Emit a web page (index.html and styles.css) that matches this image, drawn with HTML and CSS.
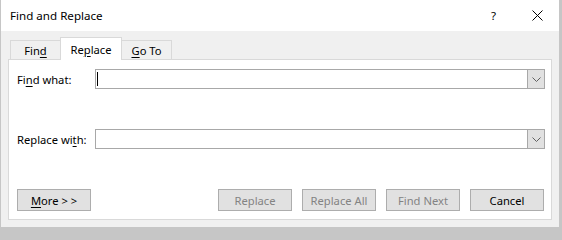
FILE: index.html
```html
<!DOCTYPE html>
<html>
<head>
<meta charset="utf-8">
<link rel="stylesheet" href="styles.css">
</head>
<body>
<div class="window">
  <div class="titlebar">
    <span class="title">Find and Replace</span>
    <span class="help">?</span>
    <span class="close">
      <svg width="11" height="11" viewBox="0 0 11 11"><path d="M0.5 0.5 L10.5 10.5 M10.5 0.5 L0.5 10.5" stroke="#000" stroke-width="1" fill="none"/></svg>
    </span>
  </div>
  <div class="content">
    <div class="tabs">
      <div class="tab tab-find">Fin<u>d</u></div>
      <div class="tab tab-replace active">Re<u>p</u>lace</div>
      <div class="tab tab-goto"><u>G</u>o To</div>
    </div>
    <div class="panel">
      <div class="row">
        <label class="label">Fi<u>n</u>d what:</label>
        <div class="combo">
          <div class="field"><span class="caret"></span></div>
          <div class="drop"><svg width="9" height="5" viewBox="0 0 9 5"><path d="M0.5 0.5 L4.5 4.5 L8.5 0.5" stroke="#606060" stroke-width="1" fill="none"/></svg></div>
        </div>
      </div>
      <div class="row row-gap">
        <label class="label">Replace wi<u>t</u>h:</label>
        <div class="combo">
          <div class="field"></div>
          <div class="drop"><svg width="9" height="5" viewBox="0 0 9 5"><path d="M0.5 0.5 L4.5 4.5 L8.5 0.5" stroke="#606060" stroke-width="1" fill="none"/></svg></div>
        </div>
      </div>
      <div class="buttons">
        <button class="btn"><u>M</u>ore &gt; &gt;</button>
        <div class="spacer"></div>
        <button class="btn disabled">Replace</button>
        <button class="btn disabled">Replace All</button>
        <button class="btn disabled">Find Next</button>
        <button class="btn">Cancel</button>
      </div>
    </div>
  </div>
</div>
</body>
</html>
```
FILE: styles.css
```css
html, body {
  margin: 0;
  padding: 0;
}
body {
  background: #c6c6c6;
  width: 562px;
  height: 231px;
  overflow: hidden;
  font-family: "Noto Sans", "Open Sans", sans-serif;
  font-size: 11.2px;
  color: #000;
}
u {
  text-decoration: underline;
  text-underline-offset: 2px;
}
.window {
  width: 558px;
  height: 227px;
  margin-left: 1px;
  background: #f0f0f0;
}
.titlebar {
  height: 31px;
  background: #fff;
  display: flex;
  align-items: center;
  box-sizing: border-box;
  font-size: 11.6px;
}
.title {
  margin-left: 9px;
  flex: 1;
}
.help {
  margin-right: 36px;
}
.close {
  width: 11px;
  height: 11px;
  margin-right: 16px;
  display: flex;
}
.content {
  padding: 0 7px;
}
.tabs {
  height: 28px;
  display: flex;
  align-items: flex-end;
  padding-left: 2px;
  position: relative;
  z-index: 1;
}
.tab {
  box-sizing: border-box;
  height: 19px;
  border: 1px solid #d9d9d9;
  border-bottom: none;
  background: #f0f0f0;
  display: flex;
  align-items: center;
  justify-content: center;
  margin-left: -1px;
  padding-top: 1px;
}
.tab-find { width: 51px; margin-left: 0; }
.tab-replace { width: 62px; }
.tab-goto { width: 51px; }
.tab.active {
  height: 23px;
  background: #fff;
  margin-bottom: -1px;
  padding-top: 0;
  position: relative;
  z-index: 2;
}
.panel {
  box-sizing: border-box;
  height: 161px;
  border: 1px solid #d9d9d9;
  background: #fff;
  padding: 9px 6px 8px 8px;
}
.row {
  display: flex;
  align-items: center;
  height: 20px;
}
.row-gap {
  margin-top: 40px;
}
.label {
  width: 78px;
}
.combo {
  flex: 1;
  height: 20px;
  box-sizing: border-box;
  border: 1px solid #a8a8a8;
  display: flex;
}
.field {
  flex: 1;
  position: relative;
}
.caret {
  position: absolute;
  left: 1px;
  top: 2px;
  width: 1px;
  height: 14px;
  background: #000;
}
.drop {
  width: 16px;
  border-left: 1px solid #a8a8a8;
  background: #e1e1e1;
  display: flex;
  align-items: center;
  justify-content: center;
}
.buttons {
  margin-top: 40px;
  display: flex;
  gap: 10px;
  padding-right: 1px;
}
.spacer {
  flex: 1;
}
.btn {
  box-sizing: border-box;
  width: 74px;
  height: 22px;
  border: 1px solid #adadad;
  background: #e1e1e1;
  font-family: inherit;
  font-size: 11.2px;
  color: #000;
  padding: 0;
  margin: 0;
}
.btn.disabled {
  color: #838383;
}
```
